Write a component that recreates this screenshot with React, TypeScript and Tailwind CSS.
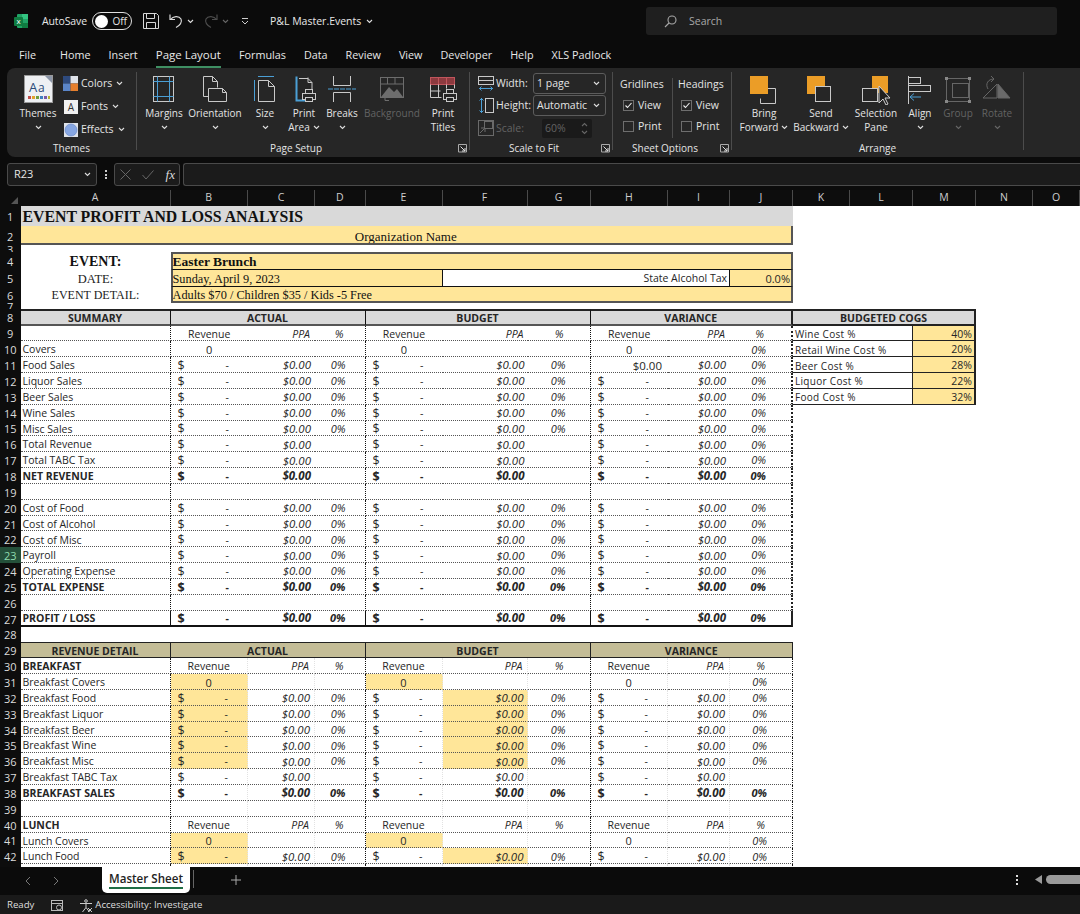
import { ReactNode } from "react";
import clsx from "clsx";
import { twMerge } from "tailwind-merge";

const line = "#c9c9c9";
const blue = "#4b9fd5";

const Chevron = ({ dim }: { dim?: boolean }) => (
  <svg width="7" height="5" viewBox="0 0 7 5" className="inline-block">
    <path d="M1 1l2.5 2.5L6 1" fill="none" stroke={dim ? "#666" : "#ddd"} strokeWidth="1.1" />
  </svg>
);

const Launcher = () => (
  <svg width="9" height="9" viewBox="0 0 9 9">
    <path d="M.5 8V.5H8.500V8z" fill="none" stroke="#aaa" />
    <path d="M2.500 2.500L7 7M7 4v3H4" fill="none" stroke="#ddd" />
  </svg>
);

const ExcelLogo = () => (
  <svg width="16" height="16" viewBox="0 0 16 16">
    <rect x="4" y="1" width="11" height="14" rx="1" fill="#21a366" />
    <rect x="9" y="1" width="6" height="5" fill="#33c481" />
    <rect x="9" y="10" width="6" height="5" fill="#107c41" />
    <rect x="1" y="4" width="9" height="9" rx="1" fill="#107c41" />
    <text x="5.500" y="11" textAnchor="middle" fontSize="8" fill="#fff" fontFamily="Open Sans">x</text>
  </svg>
);

const SaveIcon = () => (
  <svg width="16" height="16" viewBox="0 0 16 16" fill="none" stroke="#d8d8d8" strokeWidth="1">
    <path d="M.5.500h13l2 2v13H.5z" />
    <path d="M3.500.500v5h8v-5M3.500 15.500v-6h9v6" />
  </svg>
);

const UndoIcon = ({ dim }: { dim?: boolean }) => (
  <svg width="16" height="16" viewBox="0 0 16 16" fill="none" stroke={dim ? "#4c4c4c" : "#d8d8d8"} strokeWidth="1.200" className={dim ? "-scale-x-100" : ""}>
    <path d="M2 1.500v5h5M2.500 6.500C5 3 11 2.500 13 6c1.500 3-1 6.500-5 8.500" />
  </svg>
);

const ThemesIcon = () => (
  <svg width="29" height="28" viewBox="0 0 29 28">
    <rect x=".5" y=".5" width="28" height="27" fill="#eef0f3" stroke="#9a9a9a" />
    <path d="M21 1h7v7z" fill="#8c96a8" />
    <text x="5" y="17" fontSize="13" fill="#2b4a78" fontFamily="Open Sans">A</text>
    <text x="14" y="17" fontSize="12" fill="#2b4a78" fontFamily="Open Sans">a</text>
    <rect x="4" y="21" width="3" height="3" fill="#c0504d" />
    <rect x="8" y="21" width="3" height="3" fill="#e3a32b" />
    <rect x="12" y="21" width="3" height="3" fill="#6d9e3f" />
    <rect x="16" y="21" width="3" height="3" fill="#3f7fbf" />
    <rect x="20" y="21" width="3" height="3" fill="#7a5aa6" />
    <rect x="24" y="21" width="2" height="3" fill="#b5b52f" />
  </svg>
);

const ColorsIcon = () => (
  <svg width="15" height="15" viewBox="0 0 15 15">
    <rect width="7.500" height="7.500" fill="#2e4a7d" />
    <rect x="7.500" width="7.500" height="7.500" fill="#dfe3ea" />
    <rect y="7.500" width="7.500" height="7.500" fill="#5b86c9" />
    <rect x="7.500" y="7.500" width="7.500" height="7.500" fill="#e57f2d" />
  </svg>
);

const FontsIcon = () => (
  <svg width="14" height="14" viewBox="0 0 14 14">
    <rect width="14" height="14" fill="#f1f1f1" />
    <text x="7" y="11" textAnchor="middle" fontSize="10" fill="#333" fontFamily="Open Sans">A</text>
  </svg>
);

const EffectsIcon = () => (
  <svg width="14" height="14" viewBox="0 0 14 14">
    <rect width="14" height="14" fill="#dfe3ea" />
    <circle cx="7" cy="7" r="6" fill="#86a6e2" stroke="#5f80c4" strokeWidth=".6" />
  </svg>
);

const MarginsIcon = () => (
  <svg width="30" height="30" viewBox="0 0 30 30" fill="none">
    <rect x="4.500" y="1.500" width="20" height="25" stroke={line} />
    <path d="M8.500 1.500v25M20.500 1.500v25M4.500 6.500h20M4.500 21.500h20" stroke={blue} />
  </svg>
);

const OrientationIcon = () => (
  <svg width="30" height="30" viewBox="0 0 30 30" fill="none" stroke={line}>
    <path d="M3.500 1.500h9l5 5v6M3.500 1.500v20h5M12.500 1.500v5h5" />
    <path d="M8.500 13.500h14l4 4v9h-18zM22.500 13.500v4h4" fill="#262626" />
  </svg>
);

const SizeIcon = () => (
  <svg width="30" height="30" viewBox="0 0 30 30" fill="none">
    <path d="M4.500 5v21M8 1.500h16" stroke={blue} />
    <path d="M8.500 5.500h10l6 6v15h-16zM18.500 5.500v6h6" stroke={line} />
  </svg>
);

const Printer = ({ x, y }: { x: number; y: number }) => (
  <g transform={`translate(${x} ${y})`} fill="#262626" stroke={line}>
    <rect x="3.500" y=".5" width="7" height="5" />
    <rect x=".5" y="4.500" width="13" height="6" />
    <rect x="3.500" y="8.500" width="7" height="4" />
  </g>
);

const PrintAreaIcon = () => (
  <svg width="30" height="30" viewBox="0 0 30 30" fill="none">
    <path d="M7.500 1.500v24h9" stroke={blue} strokeWidth="2" />
    <path d="M10 3.500h9l4 4v9M19 2.500v5h4" stroke={line} />
    <Printer x={13} y={14} />
  </svg>
);

const BreaksIcon = () => (
  <svg width="30" height="30" viewBox="0 0 30 30" fill="none">
    <path d="M6.500 1v9.500h17V1M6.500 27V17.500h17V27" stroke={line} />
    <path d="M1 14h28" stroke={blue} strokeDasharray="5 1" />
  </svg>
);

const BackgroundIcon = () => (
  <svg width="30" height="30" viewBox="0 0 30 30" fill="none" stroke="#6d6d6d">
    <rect x="3.500" y="2.500" width="23" height="20" />
    <path d="M3.500 9h23M10.500 2.500V9M18 2.500V9" />
    <path d="M4 22l8-10 5 5 3-3 6 8z" fill="#6d6d6d" stroke="none" />
    <path d="M8 22.500v3h4" />
  </svg>
);

const PrintTitlesIcon = () => (
  <svg width="30" height="30" viewBox="0 0 30 30" fill="none">
    <rect x="2.500" y="2.500" width="24" height="7" fill="#8c3a3f" stroke="#c0555c" />
    <path d="M10.500 2.500v7M18.500 2.500v7" stroke="#c0555c" />
    <path d="M2.500 9.500v13h11M2.500 16h10M10.500 9.500v13M18.500 9.500v4M26.500 9.500v4" stroke={line} />
    <Printer x={15} y={14} />
  </svg>
);

const WidthIcon = () => (
  <svg width="17" height="17" viewBox="0 0 17 17" fill="none">
    <rect x=".5" y="1.500" width="15" height="8" stroke={line} />
    <path d="M.5 5.500h15" stroke={line} />
    <path d="M1 13.500h14M3.500 11.500l-2 2 2 2M12.500 11.500l2 2-2 2" stroke={blue} />
  </svg>
);

const HeightIcon = () => (
  <svg width="17" height="17" viewBox="0 0 17 17" fill="none">
    <rect x="7.500" y="1.500" width="8" height="14" stroke={line} />
    <path d="M3.500 1v15M1.500 3.500l2-2 2 2M1.500 13.500l2 2 2-2" stroke={blue} />
  </svg>
);

const ScaleIcon = () => (
  <svg width="17" height="17" viewBox="0 0 17 17" fill="none" stroke="#6a6a6a">
    <rect x=".5" y=".5" width="15" height="15" />
    <rect x="6.500" y="1.500" width="8" height="7" />
    <path d="M2 13l5-5M3 8h4v4" />
  </svg>
);

const Stack = ({ variant }: { variant: "fwd" | "back" | "pane" }) => (
  <svg width="30" height="30" viewBox="0 0 30 30" fill="none">
    {variant === "fwd" && (
      <>
        <path d="M12 13.500h14.500v15h-15v-5" stroke={line} />
        <rect x="1" y="1" width="18" height="18" fill="#eb9d27" />
      </>
    )}
    {variant === "back" && (
      <>
        <rect x="1" y="1" width="18" height="18" fill="#eb9d27" />
        <rect x="9.500" y="11.500" width="15" height="15" fill="#262626" stroke={line} />
      </>
    )}
    {variant === "pane" && (
      <>
        <rect x="11" y="1" width="16" height="17" fill="#eb9d27" />
        <rect x="1.500" y="13.500" width="15" height="13" fill="#262626" stroke={line} />
        <path d="M18 11v17l4-4 3 6 2-1-3-6h5z" fill="#1f1f1f" stroke="#cfcfcf" />
      </>
    )}
  </svg>
);

const AlignIcon = () => (
  <svg width="30" height="30" viewBox="0 0 30 30" fill="none">
    <path d="M3.500 1v28" stroke={line} />
    <rect x="3.500" y="2.500" width="12" height="6" stroke={line} />
    <rect x="3.500" y="10.500" width="22" height="6" stroke={line} />
    <path d="M5 22h11M9 18.500L5 22l4 3.500" stroke={blue} />
  </svg>
);

const GroupIcon = () => (
  <svg width="30" height="30" viewBox="0 0 30 30" fill="none" stroke="#666">
    <rect x="3.500" y="3.500" width="23" height="23" />
    <rect x="9.500" y="8.500" width="16" height="14" />
    <rect x="2" y="2" width="3" height="3" fill="#888" stroke="none" />
    <rect x="25" y="2" width="3" height="3" fill="#888" stroke="none" />
    <rect x="2" y="25" width="3" height="3" fill="#888" stroke="none" />
    <rect x="25" y="25" width="3" height="3" fill="#888" stroke="none" />
  </svg>
);

const RotateIcon = () => (
  <svg width="30" height="30" viewBox="0 0 30 30" fill="none" stroke="#666">
    <path d="M1 23h14V9z" />
    <path d="M16 9l12 14H16z" fill="#6a6a6a" />
    <path d="M6 14C3 9 6 4 12 4M9 1l3 3-3 3" />
  </svg>
);

function Big({ w, icon, lines, chev, dim }: { w: string; icon: ReactNode; lines: string[]; chev?: "below" | "inline"; dim?: boolean }) {
  return (
    <div className={clsx("flex flex-col items-center", w, dim ? "text-[#636363]" : "text-[#e4e4e4]")}>
      <div className="flex h-[31px] items-start justify-center">{icon}</div>
      {lines.map((l, i) => (
        <div key={l} className="flex items-center gap-[3px] whitespace-nowrap text-[10px] leading-[14px]">
          {l}
          {chev === "inline" && i === lines.length - 1 && <Chevron />}
        </div>
      ))}
      {chev === "below" && (
        <div className="flex h-[14px] items-center">
          <Chevron dim={dim} />
        </div>
      )}
    </div>
  );
}

function Group({ w, label, launcher, pad, children }: { w: string; label: string; launcher?: boolean; pad?: string; children: ReactNode }) {
  return (
    <div className={clsx("flex flex-col", w)}>
      <div className={clsx("mt-[7px] flex h-[66px]", pad)}>{children}</div>
      <div className="flex h-[14px] items-center text-[10px] text-[#e4e4e4]">
        <div className="flex-1 text-center">{label}</div>
        {launcher && (
          <div className="flex w-[14px] justify-end pr-[2px]">
            <Launcher />
          </div>
        )}
      </div>
    </div>
  );
}

const Sep = () => <div className="mt-[4px] h-[78px] w-px bg-[#4c4c4c]" />;

const Small = ({ icon, label }: { icon: ReactNode; label: string }) => (
  <div className="flex h-[23px] items-center gap-[3px] whitespace-nowrap text-[10.500px] text-[#e4e4e4]">
    <div className="flex w-[15px] justify-center">{icon}</div>
    {label}
    <span className="ml-[1px]">
      <Chevron />
    </span>
  </div>
);

const Check = ({ on, label }: { on?: boolean; label: string }) => (
  <div className="flex h-[21px] items-center gap-[4px] text-[10.500px] text-[#e4e4e4]">
    <div className="flex h-[11px] w-[11px] items-center justify-center border border-[#6e6e6e]">
      {on && (
        <svg width="9" height="9" viewBox="0 0 9 9">
          <path d="M1.500 4.500l2 2 4-4.500" fill="none" stroke="#eee" strokeWidth="1.100" />
        </svg>
      )}
    </div>
    {label}
  </div>
);

const Select = ({ value }: { value: string }) => (
  <div className="flex h-[21px] w-[73px] items-center justify-between rounded-[3px] border border-[#5c5c5c] pl-[3px] pr-[5px] text-[10.500px] text-[#e4e4e4]">
    {value}
    <Chevron />
  </div>
);

function Ribbon() {
  return (
    <div className="ml-[7px] flex h-[89px] rounded-l-[8px] bg-[#262626]">
      <Group w="w-[129px]" label="Themes" pad="pl-[13px]">
        <Big w="w-[36px]" icon={<ThemesIcon />} lines={["Themes"]} chev="below" />
        <div className="-mt-[3px] ml-[7px] flex flex-col">
          <Small icon={<ColorsIcon />} label="Colors" />
          <Small icon={<FontsIcon />} label="Fonts" />
          <Small icon={<EffectsIcon />} label="Effects" />
        </div>
      </Group>
      <Sep />
      <Group w="w-[332px]" label="Page Setup" launcher pad="pl-[6px]">
        <Big w="w-[42px]" icon={<MarginsIcon />} lines={["Margins"]} chev="below" />
        <Big w="w-[60px]" icon={<OrientationIcon />} lines={["Orientation"]} chev="below" />
        <Big w="w-[40px]" icon={<SizeIcon />} lines={["Size"]} chev="below" />
        <Big w="w-[38px]" icon={<PrintAreaIcon />} lines={["Print", "Area"]} chev="inline" />
        <Big w="w-[38px]" icon={<BreaksIcon />} lines={["Breaks"]} chev="below" />
        <Big w="w-[62px]" icon={<BackgroundIcon />} lines={["Background"]} dim />
        <Big w="w-[40px]" icon={<PrintTitlesIcon />} lines={["Print", "Titles"]} />
      </Group>
      <Sep />
      <Group w="w-[142px]" label="Scale to Fit" launcher pad="pl-[8px]">
        <div className="-mt-[2px] flex flex-col gap-[1px] text-[10.500px] text-[#e4e4e4]">
          <div className="flex items-center">
            <div className="w-[18px]"><WidthIcon /></div>
            <div className="w-[37px]">Width:</div>
            <Select value="1 page" />
          </div>
          <div className="flex items-center">
            <div className="w-[18px]"><HeightIcon /></div>
            <div className="w-[37px]">Height:</div>
            <Select value="Automatic" />
          </div>
          <div className="mt-[2px] flex items-center text-[#636363]">
            <div className="w-[18px]"><ScaleIcon /></div>
            <div className="w-[46px]">Scale:</div>
            <div className="flex h-[19px] w-[50px] items-center justify-between rounded-[2px] bg-[#1a1a1a] pl-[3px] pr-[4px]">
              60%
              <span className="flex flex-col gap-[3px]">
                <span className="rotate-180 leading-[0]"><Chevron dim /></span>
                <span className="leading-[0]"><Chevron dim /></span>
              </span>
            </div>
          </div>
        </div>
      </Group>
      <Sep />
      <Group w="w-[118px]" label="Sheet Options" launcher pad="pl-[7px]">
        <div className="flex w-[52px] flex-col">
          <div className="flex h-[20px] items-center text-[10.500px] text-[#e4e4e4]">Gridlines</div>
          <div className="pl-[3px]"><Check on label="View" /></div>
          <div className="pl-[3px]"><Check label="Print" /></div>
        </div>
        <div className="mt-[3px] h-[60px] w-px bg-[#4c4c4c]" />
        <div className="ml-[5px] flex flex-col">
          <div className="flex h-[20px] items-center text-[10.500px] text-[#e4e4e4]">Headings</div>
          <div className="pl-[3px]"><Check on label="View" /></div>
          <div className="pl-[3px]"><Check label="Print" /></div>
        </div>
      </Group>
      <Sep />
      <Group w="w-[291px]" label="Arrange" pad="pl-[4px]">
        <Big w="w-[56px]" icon={<Stack variant="fwd" />} lines={["Bring", "Forward"]} chev="inline" />
        <Big w="w-[58px]" icon={<Stack variant="back" />} lines={["Send", "Backward"]} chev="inline" />
        <Big w="w-[52px]" icon={<Stack variant="pane" />} lines={["Selection", "Pane"]} />
        <Big w="w-[36px]" icon={<AlignIcon />} lines={["Align"]} chev="below" />
        <Big w="w-[40px]" icon={<GroupIcon />} lines={["Group"]} chev="below" dim />
        <Big w="w-[38px]" icon={<RotateIcon />} lines={["Rotate"]} chev="below" dim />
      </Group>
      <Sep />
    </div>
  );
}

function RowNum({ n }: { n: number }) {
  return (
    <div
      className={clsx(
        "flex items-center justify-center overflow-hidden pt-[1px] text-[11px] leading-none",
        n === 23 ? "bg-[#24503a] text-[#8fdcae]" : "bg-[#0d0d0d] text-[#dcdcdc]",
      )}
    >
      {n}
    </div>
  );
}

function Cell({ className, children }: { className?: string; children?: ReactNode }) {
  return <div className={twMerge("flex items-center overflow-hidden whitespace-nowrap pt-[3px] text-[#262626]", className)}>{children}</div>;
}

const dot = "border-b border-dotted border-b-[#555]";
const yellow = "bg-[#ffe699]";
const thickBottom = "border-b-2 border-solid border-b-[#111]";

type Rev = "none" | "head" | "zero" | "money" | "amount";
type Block = { rev: Rev; ppa?: boolean; pct?: boolean; revY?: boolean; ppaY?: boolean };

const pad = {
  ppa: ["pr-[4px]", "pr-[3px]", "pr-[4px]"],
  pct: ["pr-[19px]", "pr-[24px]", "pr-[25px]"],
};

function Blk({ b, i, bold, rule, thick }: { b: Block; i: number; bold?: boolean; rule: string; thick: string }) {
  const isHead = b.rev === "head";
  const w = bold && !isHead ? "font-bold" : "";
  return (
    <>
      <Cell className={clsx(dot, rule, b.revY && yellow, w)}>
        {isHead && <span className="w-full text-center">Revenue</span>}
        {b.rev === "zero" && <span className="w-full text-center text-[11px]">0</span>}
        {b.rev === "amount" && <span className="w-full pr-[6px] text-right text-[11.500px]">$0.00</span>}
        {b.rev === "money" && (
          <span className="flex w-full items-center justify-between pl-[7px] pr-[19px]">
            <span className="text-[12.500px] leading-[12px]">$</span>
            <span>-</span>
          </span>
        )}
      </Cell>
      <Cell className={clsx(dot, rule, b.ppaY && yellow, w, "justify-end italic", isHead ? "text-[10.500px]" : "pt-[1px] text-[11.500px]", pad.ppa[i])}>
        {isHead ? <span className="pr-[1px]">PPA</span> : b.ppa && "$0.00"}
      </Cell>
      <Cell className={clsx(dot, thick, w, "justify-end pt-[2px] italic text-[11px]", pad.pct[i])}>{isHead ? <span className="pr-[2px]">%</span> : b.pct && "0%"}</Cell>
    </>
  );
}

function DataRow({ n, label, blocks, bold, last, detail, right }: { n: number; label?: string; blocks: Block[]; bold?: boolean; last?: boolean; detail?: boolean; right?: ReactNode }) {
  const rule = detail ? "border-r border-r-[#e2e2e2]" : "";
  return (
    <>
      <RowNum n={n} />
      <Cell className={clsx(dot, "border-r border-r-[#111] pl-[2px]", bold && "font-bold", last && thickBottom)}>{label}</Cell>
      {blocks.map((b, i) => (
        <Blk
          key={i}
          b={b}
          i={i}
          bold={bold}
          rule={clsx(rule, last && thickBottom)}
          thick={clsx(i === 2 && !detail ? "border-r-2 border-r-[#222]" : "border-r border-r-[#111]", last && thickBottom)}
        />
      ))}
      {right ?? <Cell className="col-span-5" />}
    </>
  );
}

const full: Block = { rev: "money", ppa: true, pct: true };
const noPct: Block = { rev: "money", ppa: true };
const empty: Block = { rev: "none" };
const head: Block = { rev: "head" };
const tri = (b: Block) => [b, b, b];

const cogs: Record<number, [string, string]> = {
  9: ["Wine Cost %", "40%"],
  10: ["Retail Wine Cost %", "20%"],
  11: ["Beer Cost %", "28%"],
  12: ["Liquor Cost %", "22%"],
  13: ["Food Cost %", "32%"],
};

function Cogs({ n }: { n: number }) {
  const [name, val] = cogs[n];
  return (
    <>
      <Cell className="col-span-2 border-b border-r border-[#222] pl-[2px] text-[10px] tracking-[0.03em]">{name}</Cell>
      <Cell className={clsx("justify-end border-b border-r-2 border-[#222] pr-[2px] text-[10.500px]", yellow)}>{val}</Cell>
      <Cell className="col-span-2" />
    </>
  );
}

const TopBlank = () => <Cell className="col-span-5" />;

function Sheet() {
  const covers = [{ rev: "zero" }, { rev: "zero" }, { rev: "zero", pct: true }] as Block[];
  const dCovers = [{ rev: "zero", revY: true }, { rev: "zero", revY: true }, { rev: "zero", pct: true }] as Block[];
  const dMoney = [{ ...full, revY: true }, { ...full, ppaY: true }, full];
  const summary: [number, string, Block[], boolean?, boolean?][] = [
    [9, "", tri(head)],
    [10, "Covers", covers],
    [11, "Food Sales", [full, full, { rev: "amount", ppa: true, pct: true }]],
    [12, "Liquor Sales", tri(full)],
    [13, "Beer Sales", tri(full)],
    [14, "Wine Sales", tri(full)],
    [15, "Misc Sales", tri(full)],
    [16, "Total Revenue", [noPct, noPct, full]],
    [17, "Total TABC Tax", [noPct, noPct, full]],
    [18, "NET REVENUE", [noPct, noPct, full], true],
    [19, "", tri(empty)],
    [20, "Cost of Food", tri(full)],
    [21, "Cost of Alcohol", tri(full)],
    [22, "Cost of Misc", tri(full)],
    [23, "Payroll", tri(full)],
    [24, "Operating Expense", tri(full)],
    [25, "TOTAL EXPENSE", tri(full), true],
    [26, "", tri(empty)],
    [27, "PROFIT / LOSS", tri(full), true, true],
  ];
  const detail: [number, string, Block[], boolean?][] = [
    [30, "BREAKFAST", tri(head), true],
    [31, "Breakfast Covers", dCovers],
    [32, "Breakfast Food", dMoney],
    [33, "Breakfast Liquor", dMoney],
    [34, "Breakfast Beer", dMoney],
    [35, "Breakfast Wine", dMoney],
    [36, "Breakfast Misc", dMoney],
    [37, "Breakfast TABC Tax", tri(noPct)],
    [38, "BREAKFAST SALES", tri(full), true],
    [39, "", tri(empty)],
    [40, "LUNCH", tri(head), true],
    [41, "Lunch Covers", dCovers],
    [42, "Lunch Food", dMoney],
    [43, "", tri(empty)],
  ];
  const gray = "bg-[#d9d9d9] justify-center font-bold border-t-2 border-b-2 border-t-[#222] border-b-[#555]";
  const tan = "bg-[#c4bd97] justify-center font-bold border-y border-[#222]";
  return (
    <div className="h-[677px] overflow-hidden bg-white font-['Open_Sans',sans-serif] text-[10.500px]">
      <div className="grid grid-cols-[20.500px_150px_77.500px_67px_50.500px_77px_85px_63px_77.500px_62px_63px_57px_63px_63px_57px_1fr] grid-rows-[16px_20px_19px_7px_18px_16.500px_16px_6px_17px_repeat(35,15.850px)]">
        <div className="flex items-end justify-end bg-[#0d0d0d] pb-[2px] pr-[3px]">
          <svg width="7" height="7" viewBox="0 0 7 7"><path d="M7 0v7H0z" fill="#555" /></svg>
        </div>
        {["A", "B", "C", "D", "E", "F", "G", "H", "I", "J", "K", "L", "M", "N", "O"].map((c) => (
          <div key={c} className="flex items-center justify-center border-r border-r-[#4a4a4a] bg-[#0d0d0d] text-[10.500px] text-[#cfcfcf]">
            {c}
          </div>
        ))}

        <RowNum n={1} />
        <Cell className="col-span-10 bg-[#d9d9d9] pl-[2px] pt-[2px] font-['Liberation_Serif',serif] text-[15.800px] font-bold text-[#111]">EVENT PROFIT AND LOSS ANALYSIS</Cell>
        <TopBlank />

        <RowNum n={2} />
        <Cell className={clsx("col-span-10 justify-center border-b-2 border-r-2 border-[#555] pt-[5px] font-['Liberation_Serif',serif] text-[13px] text-[#111]", yellow)}>Organization Name</Cell>
        <TopBlank />

        <RowNum n={3} />
        <Cell className="col-span-10" />
        <TopBlank />

        <RowNum n={4} />
        <Cell className="justify-center pt-[1px] font-['Liberation_Serif',serif] text-[14px] font-bold text-[#111]">EVENT:</Cell>
        <Cell className={clsx("col-span-9 border-x-2 border-b border-t-2 border-x-[#555] border-t-[#555] border-b-[#111] pt-[1px] font-['Liberation_Serif',serif] text-[13.500px] font-bold text-[#111]", yellow)}>Easter Brunch</Cell>
        <TopBlank />

        <RowNum n={5} />
        <Cell className="justify-center pt-[2px] font-['Liberation_Serif',serif] text-[12.500px] text-[#222]">DATE:</Cell>
        <Cell className={clsx("col-span-4 border-b border-l-2 border-r border-[#111] border-l-[#555] pt-[2px] font-['Liberation_Serif',serif] text-[12.300px] text-[#111]", yellow)}>Sunday, April 9, 2023</Cell>
        <Cell className="col-span-4 justify-end border-b border-r border-[#111] pr-[2px] pt-[2px] text-[10.500px]">State Alcohol Tax</Cell>
        <Cell className={clsx("justify-end border-b border-r-2 border-b-[#111] border-r-[#555] pr-[1px] pt-[2px] text-[11px]", yellow)}>0.0%</Cell>
        <TopBlank />

        <RowNum n={6} />
        <Cell className="justify-center pt-[1px] font-['Liberation_Serif',serif] text-[12px] text-[#222]">EVENT DETAIL:</Cell>
        <Cell className={clsx("col-span-9 border-x-2 border-b-2 border-[#555] pt-[3px] font-['Liberation_Serif',serif] text-[12.300px] text-[#111]", yellow)}>Adults $70 / Children $35 / Kids -5 Free</Cell>
        <TopBlank />

        <RowNum n={7} />
        <Cell className="col-span-10" />
        <TopBlank />

        <RowNum n={8} />
        <Cell className={clsx(gray, "border-r border-r-[#111]")}>SUMMARY</Cell>
        <Cell className={clsx(gray, "col-span-3 border-r border-r-[#111]")}>ACTUAL</Cell>
        <Cell className={clsx(gray, "col-span-3 border-r border-r-[#111]")}>BUDGET</Cell>
        <Cell className={clsx(gray, "col-span-3 border-r-2 border-r-[#222]")}>VARIANCE</Cell>
        <Cell className="col-span-3 justify-center border-y-2 border-r-2 border-[#222] bg-[#d9d9d9] font-bold">BUDGETED COGS</Cell>
        <Cell className="col-span-2" />

        {summary.map(([n, label, blocks, bold, last]) => (
          <DataRow key={n} n={n} label={label} blocks={blocks} bold={bold} last={last} right={cogs[n] ? <Cogs n={n} /> : undefined} />
        ))}

        <RowNum n={28} />
        <Cell className="col-span-15" />

        <RowNum n={29} />
        <Cell className={clsx(tan, "border-r border-r-[#222]")}>REVENUE DETAIL</Cell>
        <Cell className={clsx(tan, "col-span-3 border-r border-r-[#222]")}>ACTUAL</Cell>
        <Cell className={clsx(tan, "col-span-3 border-r border-r-[#222]")}>BUDGET</Cell>
        <Cell className={clsx(tan, "col-span-3 border-r border-r-[#222]")}>VARIANCE</Cell>
        <TopBlank />

        {detail.map(([n, label, blocks, bold]) => (
          <DataRow key={n} n={n} label={label} blocks={blocks} bold={bold} detail />
        ))}
      </div>
    </div>
  );
}

export default function App() {
  return (
    <div className="flex h-[914px] w-[1080px] flex-col overflow-hidden bg-[#0b0b0b] font-['Open_Sans',sans-serif] text-[#e6e6e6]">
      <div className="flex h-[42px] items-center whitespace-nowrap pl-[13px] text-[10.500px]">
        <ExcelLogo />
        <span className="ml-[13px] mt-[2px] w-[44px] tracking-[-0.01em] text-[#e8e8e8]">AutoSave</span>
        <div className="ml-[6px] flex h-[18px] w-[40px] items-center justify-between rounded-full border border-[#e0e0e0] pl-[2px] pr-[4px]">
          <span className="h-[13px] w-[13px] rounded-full bg-white" />
          <span className="text-[10px]">Off</span>
        </div>
        <span className="ml-[11px]"><SaveIcon /></span>
        <span className="ml-[9px]"><UndoIcon /></span>
        <span className="ml-[3px]"><Chevron /></span>
        <span className="ml-[9px]"><UndoIcon dim /></span>
        <span className="ml-[3px]"><Chevron dim /></span>
        <svg width="8" height="8" viewBox="0 0 8 8" className="ml-[12px]">
          <path d="M1 1.500h6M1 4l3 3 3-3" fill="none" stroke="#ccc" />
        </svg>
        <span className="ml-[21px] mt-[2px] text-[#e8e8e8]">P&amp;L Master.Events</span>
        <span className="ml-[5px]"><Chevron /></span>
        <div className="ml-auto mr-[23px] flex h-[28px] w-[411px] items-center rounded-[3px] bg-[#1f1f1f] pl-[18px] text-[#a8a8a8]">
          <svg width="13" height="13" viewBox="0 0 13 13" fill="none" stroke="#a8a8a8" strokeWidth="1.100">
            <circle cx="8" cy="5" r="4" />
            <path d="M5 8l-4 4" />
          </svg>
          <span className="ml-[12px] mt-[2px]">Search</span>
        </div>
      </div>

      <div className="flex h-[26px] items-center gap-[18px] pl-[19px] text-[10.800px] text-[#e8e8e8]">
        <span className="mr-[6px]">File</span>
        <span>Home</span>
        <span>Insert</span>
        <span className="relative text-[11.500px]">
          Page Layout
          <span className="absolute -bottom-[4px] left-0 h-[2px] w-full bg-[#3f8f63]" />
        </span>
        <span>Formulas</span>
        <span>Data</span>
        <span>Review</span>
        <span>View</span>
        <span>Developer</span>
        <span>Help</span>
        <span>XLS Padlock</span>
      </div>

      <Ribbon />

      <div className="mt-[6px] flex h-[23px] items-stretch pl-[7px] text-[11px]">
        <div className="flex w-[90px] items-center justify-between rounded-[3px] border border-[#4a4a4a] bg-[#1b1b1b] pl-[6px] pr-[5px]">
          R23
          <Chevron />
        </div>
        <div className="flex w-[17px] flex-col items-center justify-center gap-[1.500px]">
          <span className="h-[2px] w-[2px] bg-[#ccc]" />
          <span className="h-[2px] w-[2px] bg-[#ccc]" />
          <span className="h-[2px] w-[2px] bg-[#ccc]" />
        </div>
        <div className="flex w-[66px] items-center justify-between rounded-[3px] border border-[#4a4a4a] bg-[#1b1b1b] pl-[5px] pr-[4px]">
          <svg width="11" height="11" viewBox="0 0 11 11" stroke="#666" fill="none"><path d="M.5.500l10 10M10.500.500l-10 10" /></svg>
          <svg width="12" height="10" viewBox="0 0 12 10" stroke="#666" fill="none"><path d="M.5 5l3.500 4 7.500-8.500" /></svg>
          <span className="font-['Liberation_Serif',serif] text-[13px] italic text-[#ddd]">fx</span>
        </div>
        <div className="ml-[3px] flex-1 rounded-l-[3px] border border-r-0 border-[#4a4a4a] bg-[#1b1b1b]" />
      </div>

      <div className="mt-[4px]">
        <Sheet />
      </div>

      <div className="flex h-[28px] items-start bg-[#0b0b0b] text-[#ddd]">
        <svg width="8" height="10" viewBox="0 0 8 10" className="ml-[24px] mt-[9px]" fill="none" stroke="#777"><path d="M6 1L2 5l4 4" /></svg>
        <svg width="8" height="10" viewBox="0 0 8 10" className="ml-[20px] mt-[9px]" fill="none" stroke="#777"><path d="M2 1l4 4-4 4" /></svg>
        <div className="ml-[42px] flex h-[26px] w-[88px] flex-col items-center rounded-b-[5px] bg-white font-semibold text-[#222]">
          <div className="pt-[3px] text-[11.600px] leading-[17px]">Master Sheet</div>
          <div className="h-[2px] w-[74px] bg-[#1f6e46]" />
        </div>
        <div className="ml-[3px] mt-[3px] h-[18px] w-px bg-[#666]" />
        <svg width="12" height="12" viewBox="0 0 12 12" className="ml-[36px] mt-[7px]" stroke="#aaa"><path d="M6 1v10M1 6h10" /></svg>
        <div className="ml-[774px] mt-[8px] flex flex-col gap-[2px]">
          <span className="h-[2px] w-[2px] bg-[#ddd]" />
          <span className="h-[2px] w-[2px] bg-[#ddd]" />
          <span className="h-[2px] w-[2px] bg-[#ddd]" />
        </div>
        <svg width="7" height="9" viewBox="0 0 7 9" className="ml-[17px] mt-[8px]"><path d="M7 0v9L0 4.500z" fill="#999" /></svg>
        <div className="ml-[4px] mt-[8px] h-[9px] flex-1 rounded-l-full bg-[#9a9a9a]" />
      </div>

      <div className="flex h-[19px] flex-1 items-center bg-[#1a1a1a] pl-[7px] pt-[2px] text-[9.600px] text-[#dedede]">
        <span>Ready</span>
        <svg width="13" height="13" viewBox="0 0 13 13" className="ml-[17px]" fill="none" stroke="#bbb">
          <rect x=".5" y="1.500" width="11" height="10" />
          <path d="M.5 4.500h11" />
          <circle cx="8" cy="8.500" r="2.500" fill="#1a1a1a" />
        </svg>
        <svg width="14" height="14" viewBox="0 0 14 14" className="ml-[15px]" fill="none" stroke="#ccc">
          <circle cx="7" cy="2" r="1.300" />
          <path d="M1 4.500h12M7 4.500v4M7 8.500L3.500 13M7 8.500l3.500 4.500M9 9l4 4M13 9l-4 4" />
        </svg>
        <span className="ml-[2px]">Accessibility: Investigate</span>
      </div>
    </div>
  );
}
